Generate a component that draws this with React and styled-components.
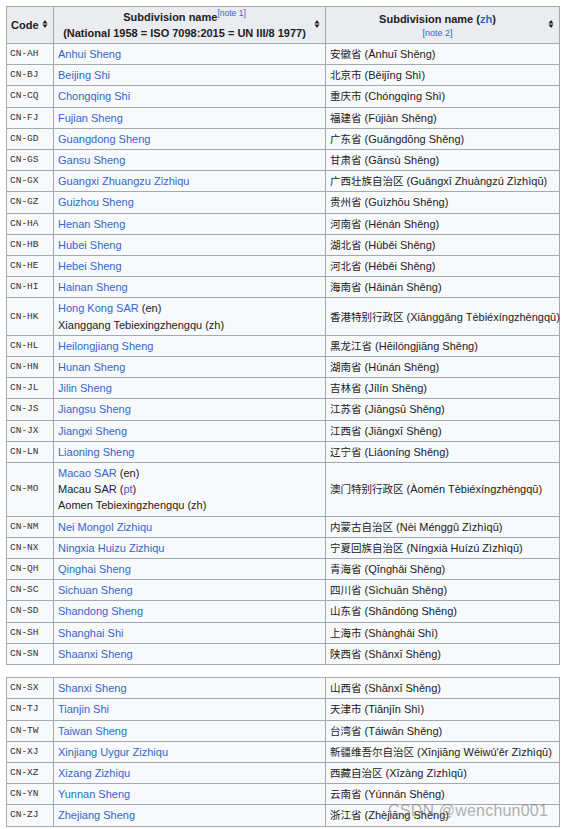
import React from 'react';
import styled, { createGlobalStyle } from 'styled-components';

const GlobalStyle = createGlobalStyle`
  html, body {
    margin: 0;
    padding: 0;
    background: #ffffff;
  }
  body {
    font-family: "Liberation Sans", Arial, "Noto Sans CJK SC", sans-serif;
    color: #202122;
  }
`;

const Page = styled.div`
  position: relative;
  width: 561px;
  min-height: 829px;
  padding: 6px 0 0 6px;
  box-sizing: border-box;
`;

const Table = styled.table`
  width: 553px;
  table-layout: fixed;
  border-collapse: collapse;
  background: #f8f9fa;
  border: 1px solid #a2a9b1;
  font-size: 11px;
  line-height: 16.2px;
  margin-top: ${(p) => (p.$gap ? '12px' : '0')};
`;

const HeadCell = styled.th`
  position: relative;
  background: #eaecf0;
  border: 1px solid #a2a9b1;
  padding: 2px 14px 2px 4px;
  font-weight: bold;
  text-align: ${(p) => p.$align || 'center'};
  vertical-align: middle;
  line-height: 16px;
`;

const Cell = styled.td`
  border: 1px solid #a2a9b1;
  padding: 2px 4px 2px ${(p) => (p.$mono ? '3px' : '4px')};
  vertical-align: middle;
  white-space: nowrap;
  font-family: ${(p) =>
    p.$mono ? '"Liberation Mono", "DejaVu Sans Mono", monospace' : 'inherit'};
  font-size: ${(p) => (p.$mono ? '9.5px' : '11px')};
  color: ${(p) => (p.$mono ? '#333333' : 'inherit')};
`;

const Zh = styled.span`
  font-family: "Noto Sans CJK SC", sans-serif;
  font-size: 10.5px;
`;

const Link = styled.span`
  color: #3366cc;
`;

const Note = styled.sup`
  color: #3366cc;
  font-weight: normal;
  font-size: 8.5px;
  line-height: 1;
  vertical-align: 5px;
`;

const NoteLine = styled.div`
  color: #3366cc;
  font-weight: normal;
  font-size: 9px;
  line-height: 12px;
`;

const SortWrap = styled.span`
  position: absolute;
  right: 5px;
  top: 50%;
  margin-top: -5px;
  width: 6px;
  height: 8px;
  display: flex;
`;

const Watermark = styled.div`
  position: absolute;
  right: 13px;
  top: 802px;
  font-family: "Liberation Sans", Arial, sans-serif;
  font-size: 16px;
  color: rgba(110, 110, 110, 0.55);
  letter-spacing: 0.2px;
  pointer-events: none;
`;

const SortIcon = () => (
  <SortWrap>
    <svg width="6" height="8" viewBox="0 0 6 8">
      <path d="M3 0 L5.5 3.5 L0.5 3.5 Z" fill="#202122" />
      <path d="M3 8 L5.5 4.5 L0.5 4.5 Z" fill="#202122" />
    </svg>
  </SortWrap>
);

const first = [
  ['CN-AH', [[['Anhui Sheng', true]]], '安徽省', '(Ānhuī Shěng)'],
  ['CN-BJ', [[['Beijing Shi', true]]], '北京市', '(Běijīng Shì)'],
  ['CN-CQ', [[['Chongqing Shi', true]]], '重庆市', '(Chóngqìng Shì)'],
  ['CN-FJ', [[['Fujian Sheng', true]]], '福建省', '(Fújiàn Shěng)'],
  ['CN-GD', [[['Guangdong Sheng', true]]], '广东省', '(Guǎngdōng Shěng)'],
  ['CN-GS', [[['Gansu Sheng', true]]], '甘肃省', '(Gānsù Shěng)'],
  ['CN-GX', [[['Guangxi Zhuangzu Zizhiqu', true]]], '广西壮族自治区', '(Guǎngxī Zhuàngzú Zìzhìqū)'],
  ['CN-GZ', [[['Guizhou Sheng', true]]], '贵州省', '(Guìzhōu Shěng)'],
  ['CN-HA', [[['Henan Sheng', true]]], '河南省', '(Hénán Shěng)'],
  ['CN-HB', [[['Hubei Sheng', true]]], '湖北省', '(Húběi Shěng)'],
  ['CN-HE', [[['Hebei Sheng', true]]], '河北省', '(Héběi Shěng)'],
  ['CN-HI', [[['Hainan Sheng', true]]], '海南省', '(Hǎinán Shěng)'],
  [
    'CN-HK',
    [
      [['Hong Kong SAR', true], [' (en)', false]],
      [['Xianggang Tebiexingzhengqu (zh)', false]],
    ],
    '香港特别行政区',
    '(Xiānggǎng Tèbiéxíngzhèngqū)',
  ],
  ['CN-HL', [[['Heilongjiang Sheng', true]]], '黑龙江省', '(Hēilóngjiāng Shěng)'],
  ['CN-HN', [[['Hunan Sheng', true]]], '湖南省', '(Húnán Shěng)'],
  ['CN-JL', [[['Jilin Sheng', true]]], '吉林省', '(Jílín Shěng)'],
  ['CN-JS', [[['Jiangsu Sheng', true]]], '江苏省', '(Jiāngsū Shěng)'],
  ['CN-JX', [[['Jiangxi Sheng', true]]], '江西省', '(Jiāngxī Shěng)'],
  ['CN-LN', [[['Liaoning Sheng', true]]], '辽宁省', '(Liáoníng Shěng)'],
  [
    'CN-MO',
    [
      [['Macao SAR', true], [' (en)', false]],
      [['Macau SAR (', false], ['pt', true], [')', false]],
      [['Aomen Tebiexingzhengqu (zh)', false]],
    ],
    '澳门特别行政区',
    '(Àomén Tèbiéxíngzhèngqū)',
  ],
  ['CN-NM', [[['Nei Mongol Zizhiqu', true]]], '内蒙古自治区', '(Nèi Ménggǔ Zìzhìqū)'],
  ['CN-NX', [[['Ningxia Huizu Zizhiqu', true]]], '宁夏回族自治区', '(Níngxià Huízú Zìzhìqū)'],
  ['CN-QH', [[['Qinghai Sheng', true]]], '青海省', '(Qīnghǎi Shěng)'],
  ['CN-SC', [[['Sichuan Sheng', true]]], '四川省', '(Sìchuān Shěng)'],
  ['CN-SD', [[['Shandong Sheng', true]]], '山东省', '(Shāndōng Shěng)'],
  ['CN-SH', [[['Shanghai Shi', true]]], '上海市', '(Shànghǎi Shì)'],
  ['CN-SN', [[['Shaanxi Sheng', true]]], '陕西省', '(Shǎnxī Shěng)'],
];

const second = [
  ['CN-SX', [[['Shanxi Sheng', true]]], '山西省', '(Shānxī Shěng)'],
  ['CN-TJ', [[['Tianjin Shi', true]]], '天津市', '(Tiānjīn Shì)'],
  ['CN-TW', [[['Taiwan Sheng', true]]], '台湾省', '(Táiwān Shěng)'],
  ['CN-XJ', [[['Xinjiang Uygur Zizhiqu', true]]], '新疆维吾尔自治区', "(Xīnjiāng Wéiwú'ěr Zìzhìqū)"],
  ['CN-XZ', [[['Xizang Zizhiqu', true]]], '西藏自治区', '(Xīzàng Zìzhìqū)'],
  ['CN-YN', [[['Yunnan Sheng', true]]], '云南省', '(Yúnnán Shěng)'],
  ['CN-ZJ', [[['Zhejiang Sheng', true]]], '浙江省', '(Zhèjiāng Shěng)'],
];

const Cols = () => (
  <colgroup>
    <col style={{ width: 47 }} />
    <col style={{ width: 272 }} />
    <col style={{ width: 234 }} />
  </colgroup>
);

const Row = ({ code, lines, zh, pinyin }) => (
  <tr>
    <Cell $mono>{code}</Cell>
    <Cell>
      {lines.map((parts, i) => (
        <div key={i}>
          {parts.map(([text, link], j) =>
            link ? <Link key={j}>{text}</Link> : <span key={j}>{text}</span>
          )}
        </div>
      ))}
    </Cell>
    <Cell>
      <Zh>{zh}</Zh> {pinyin}
    </Cell>
  </tr>
);

const App = () => (
  <Page>
    <GlobalStyle />
    <Table>
      <Cols />
      <thead>
        <tr>
          <HeadCell $align="left">
            Code
            <SortIcon />
          </HeadCell>
          <HeadCell>
            Subdivision name<Note>[note 1]</Note>
            <br />
            (National 1958 = ISO 7098:2015 = UN III/8 1977)
            <SortIcon />
          </HeadCell>
          <HeadCell>
            Subdivision name (<Link>zh</Link>)
            <NoteLine>[note 2]</NoteLine>
            <SortIcon />
          </HeadCell>
        </tr>
      </thead>
      <tbody>
        {first.map(([code, lines, zh, pinyin]) => (
          <Row key={code} code={code} lines={lines} zh={zh} pinyin={pinyin} />
        ))}
      </tbody>
    </Table>
    <Table $gap>
      <Cols />
      <tbody>
        {second.map(([code, lines, zh, pinyin]) => (
          <Row key={code} code={code} lines={lines} zh={zh} pinyin={pinyin} />
        ))}
      </tbody>
    </Table>
    <Watermark>CSDN @wenchun001</Watermark>
  </Page>
);

export default App;
